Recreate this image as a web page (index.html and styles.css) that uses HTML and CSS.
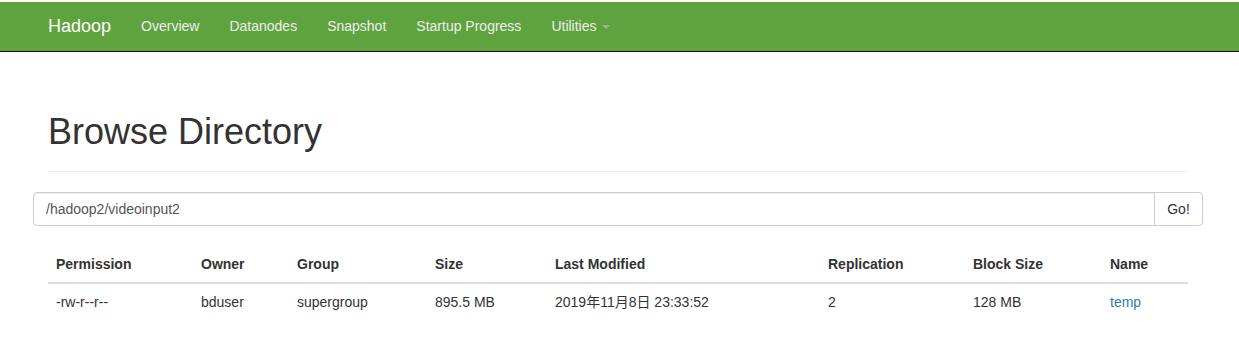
FILE: index.html
```html
<!DOCTYPE html>
<html lang="en">
<head>
    <meta charset="UTF-8">
    <title>Browsing HDFS</title>
    <link rel="stylesheet" href="styles.css">
</head>
<body>
    <header class="navbar">
        <div class="container nav-inner">
            <a class="brand" href="#">Hadoop</a>
            <ul class="nav">
                <li><a href="#">Overview</a></li>
                <li><a href="#">Datanodes</a></li>
                <li><a href="#">Snapshot</a></li>
                <li><a href="#">Startup Progress</a></li>
                <li><a href="#">Utilities <span class="caret"></span></a></li>
            </ul>
        </div>
    </header>
    <div class="container main">
        <div class="page-header">
            <h1>Browse Directory</h1>
        </div>
        <div class="input-group">
            <input type="text" class="form-control" value="/hadoop2/videoinput2">
            <button class="btn">Go!</button>
        </div>
        <div class="table-wrap">
            <table class="table">
                <thead>
                    <tr>
                        <th class="c1">Permission</th>
                        <th class="c2">Owner</th>
                        <th class="c3">Group</th>
                        <th class="c4">Size</th>
                        <th class="c5">Last Modified</th>
                        <th class="c6">Replication</th>
                        <th class="c7">Block Size</th>
                        <th class="c8">Name</th>
                    </tr>
                </thead>
                <tbody>
                    <tr>
                        <td>-rw-r--r--</td>
                        <td>bduser</td>
                        <td>supergroup</td>
                        <td>895.5 MB</td>
                        <td>2019年11月8日 23:33:52</td>
                        <td>2</td>
                        <td>128 MB</td>
                        <td><a href="#">temp</a></td>
                    </tr>
                </tbody>
            </table>
        </div>
    </div>
</body>
</html>
```

FILE: styles.css
```css
* {
    box-sizing: border-box;
}
body {
    margin: 0;
    padding-top: 2px;
    background: #fff;
    color: #333;
    font-family: "Liberation Sans", "Noto Sans CJK SC", Arial, sans-serif;
    font-size: 14px;
    line-height: 20px;
}
a {
    color: #337ab7;
    text-decoration: none;
}
.container {
    width: 1170px;
    margin-left: 33px;
    padding: 0 15px;
}
.navbar {
    background: #5fa33e;
    border-bottom: 1px solid #111;
    height: 50px;
}
.nav-inner {
    display: flex;
    align-items: center;
    height: 48px;
}
.brand {
    color: #fff;
    font-size: 18px;
    line-height: 20px;
    padding: 15px 15px 15px 0;
}
.nav {
    display: flex;
    list-style: none;
    margin: 0;
    padding: 0;
}
.nav a {
    display: block;
    color: #eee;
    padding: 15px;
}
.caret {
    display: inline-block;
    width: 0;
    height: 0;
    margin-left: 2px;
    vertical-align: middle;
    border-top: 4px solid #aaa;
    border-left: 4px solid transparent;
    border-right: 4px solid transparent;
}
.main {
    padding-top: 60px;
}
.page-header {
    padding-bottom: 9px;
    margin-bottom: 20px;
    border-bottom: 1px solid #eee;
}
.page-header h1 {
    margin: 0 0 10px;
    font-size: 36px;
    font-weight: 500;
    line-height: 1.1;
}
.input-group {
    display: flex;
    margin: 0 -15px;
}
.form-control {
    flex: 1;
    height: 34px;
    padding: 6px 12px;
    font: inherit;
    color: #555;
    border: 1px solid #ccc;
    border-radius: 4px 0 0 4px;
    box-shadow: inset 0 1px 1px rgba(0, 0, 0, .075);
}
.btn {
    width: 49px;
    height: 34px;
    margin-left: -1px;
    font: inherit;
    color: #333;
    background: #fff;
    border: 1px solid #ccc;
    border-radius: 0 4px 4px 0;
}
.table-wrap {
    margin-top: 20px;
}
.table {
    width: 100%;
    border-collapse: collapse;
    table-layout: fixed;
}
.table th,
.table td {
    padding: 8px;
    text-align: left;
    vertical-align: top;
}
.table th {
    font-weight: bold;
    border-bottom: 2px solid #ddd;
}
.table td {
    border-top: 1px solid #ddd;
}
.c1 { width: 145px; }
.c2 { width: 96px; }
.c3 { width: 138px; }
.c4 { width: 120px; }
.c5 { width: 273px; }
.c6 { width: 145px; }
.c7 { width: 137px; }
.c8 { width: 86px; }
```
